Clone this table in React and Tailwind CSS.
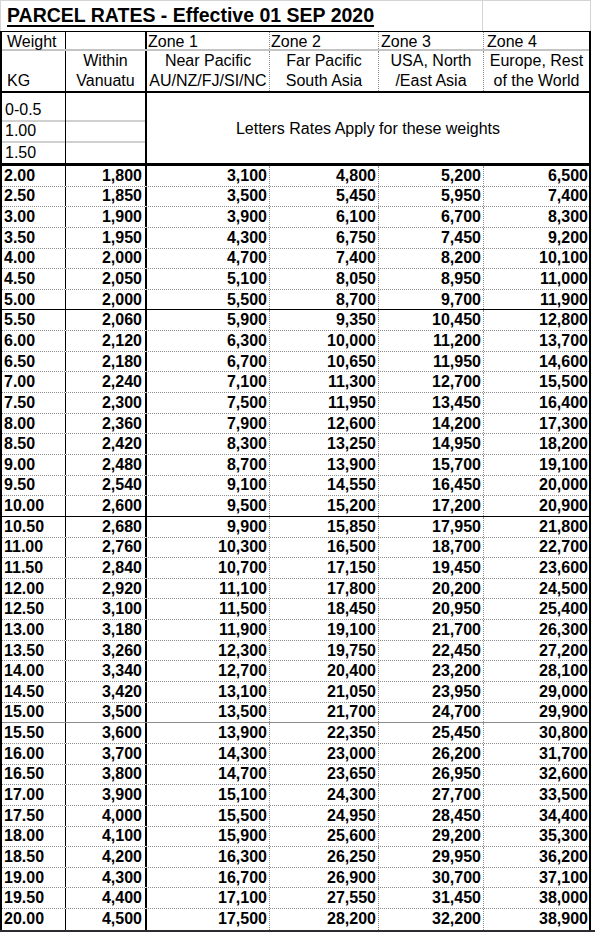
import React from "react";

const weights = Array.from({ length: 37 }, (_, i) => (2 + i * 0.5).toFixed(2));
const cols = [
  [1800,1850,1900,1950,2000,2050,2000,2060,2120,2180,2240,2300,2360,2420,2480,2540,2600,2680,2760,2840,2920,3100,3180,3260,3340,3420,3500,3600,3700,3800,3900,4000,4100,4200,4300,4400,4500],
  [3100,3500,3900,4300,4700,5100,5500,5900,6300,6700,7100,7500,7900,8300,8700,9100,9500,9900,10300,10700,11100,11500,11900,12300,12700,13100,13500,13900,14300,14700,15100,15500,15900,16300,16700,17100,17500],
  [4800,5450,6100,6750,7400,8050,8700,9350,10000,10650,11300,11950,12600,13250,13900,14550,15200,15850,16500,17150,17800,18450,19100,19750,20400,21050,21700,22350,23000,23650,24300,24950,25600,26250,26900,27550,28200],
  [5200,5950,6700,7450,8200,8950,9700,10450,11200,11950,12700,13450,14200,14950,15700,16450,17200,17950,18700,19450,20200,20950,21700,22450,23200,23950,24700,25450,26200,26950,27700,28450,29200,29950,30700,31450,32200],
  [6500,7400,8300,9200,10100,11000,11900,12800,13700,14600,15500,16400,17300,18200,19100,20000,20900,21800,22700,23600,24500,25400,26300,27200,28100,29000,29900,30800,31700,32600,33500,34400,35300,36200,37100,38000,38900],
];

const fmt = (n) => n.toLocaleString("en-US");

function rowBorder(i) {
  if (i === 6 || i === 16) return "border-b border-solid border-black";
  if (i === 26) return "border-b border-solid border-[#8c8c8c]";
  if (i === 36) return "";
  return "border-b border-dotted border-[#8c8c8c]";
}

export default function App() {
  return (
    <div
      className="w-[595px] h-[932px] bg-white text-black overflow-hidden flex flex-col"
      style={{ fontFamily: '"Liberation Sans", Arial, sans-serif' }}
    >
      {/* Title row */}
      <div className="h-[31px] w-[591px] flex border-t border-[#d4d4d4] border-l border-l-[#d4d4d4] shrink-0">
        <div className="w-[482px] h-full border-r border-[#d4d4d4] flex items-center pl-[6px]">
          <span className="text-[19.5px] font-bold underline decoration-2 underline-offset-[3px] leading-none">
            PARCEL RATES - Effective 01 SEP 2020
          </span>
        </div>
        <div className="w-[108px] h-full border-r border-[#d4d4d4]"></div>
      </div>

      {/* Table */}
      <div className="w-[591px] border-l-2 border-r-2 border-black shrink-0">
        {/* Header */}
        <div className="border-t border-black text-[16px] leading-[20px]">
          <div className="flex h-[19px] border-b-2 border-[#c4c4c4]">
            <div className="w-[64px] border-r border-black pl-[5px] leading-[19px]">Weight</div>
            <div className="w-[81px] border-r-2 border-black"></div>
            <div className="w-[123px] border-r border-dotted border-[#8c8c8c] pl-[1px] leading-[19px]">Zone 1</div>
            <div className="w-[109px] border-r border-dotted border-[#8c8c8c] pl-[1px] leading-[19px]">Zone 2</div>
            <div className="w-[105px] border-r border-dotted border-[#8c8c8c] pl-[2px] leading-[19px]">Zone 3</div>
            <div className="w-[105px] pl-[3px] leading-[19px]">Zone 4</div>
          </div>
          <div className="flex h-[42px] border-b-2 border-black">
            <div className="w-[64px] border-r border-black pl-[5px] flex flex-col justify-end">KG</div>
            <div className="w-[81px] border-r-2 border-black flex flex-col justify-end items-center">
              <span>Within</span>
              <span>Vanuatu</span>
            </div>
            <div className="w-[123px] border-r border-dotted border-[#8c8c8c] flex flex-col justify-end items-center">
              <span>Near Pacific</span>
              <span>AU/NZ/FJ/SI/NC</span>
            </div>
            <div className="w-[109px] border-r border-dotted border-[#8c8c8c] flex flex-col justify-end items-center">
              <span>Far Pacific</span>
              <span>South Asia</span>
            </div>
            <div className="w-[105px] border-r border-dotted border-[#8c8c8c] flex flex-col justify-end items-center">
              <span>USA, North</span>
              <span>/East Asia</span>
            </div>
            <div className="w-[105px] flex flex-col justify-end items-center">
              <span>Europe, Rest</span>
              <span>of the World</span>
            </div>
          </div>
        </div>

        {/* Letters section */}
        <div className="flex h-[73px] border-b-[3px] border-black text-[16px] leading-[20px]">
          <div className="w-[64px] border-r border-black flex flex-col">
            <div className="h-[29px] border-b-2 border-[#d0d0d0] pl-[3px] flex items-end">0-0.5</div>
            <div className="h-[21px] border-b-2 border-[#d0d0d0] pl-[3px] flex items-end">1.00</div>
            <div className="h-[20px] pl-[3px] flex items-end">1.50</div>
          </div>
          <div className="w-[81px] border-r-2 border-black flex flex-col">
            <div className="h-[29px] border-b-2 border-[#d0d0d0]"></div>
            <div className="h-[21px] border-b-2 border-[#d0d0d0]"></div>
            <div className="h-[20px]"></div>
          </div>
          <div className="flex-1 flex items-center justify-center pt-[1px]">
            Letters Rates Apply for these weights
          </div>
        </div>

        {/* Data rows */}
        <div className="text-[16px] font-bold leading-none">
          {weights.map((w, i) => (
            <div key={w} className={`flex h-[20.65px] ${rowBorder(i)}`}>
              <div className="w-[64px] border-r border-black pl-[2px] flex items-center">{w}</div>
              <div className="w-[81px] border-r-2 border-black pr-[3px] flex items-center justify-end">{fmt(cols[0][i])}</div>
              <div className="w-[123px] border-r border-dotted border-[#8c8c8c] pr-[2px] flex items-center justify-end">{fmt(cols[1][i])}</div>
              <div className="w-[109px] border-r border-dotted border-[#8c8c8c] pr-[2px] flex items-center justify-end">{fmt(cols[2][i])}</div>
              <div className="w-[105px] border-r border-dotted border-[#8c8c8c] pr-[2px] flex items-center justify-end">{fmt(cols[3][i])}</div>
              <div className="w-[105px] pr-[1px] flex items-center justify-end">{fmt(cols[4][i])}</div>
            </div>
          ))}
        </div>
      </div>
      <div className="flex-1 bg-[#2e2b33]"></div>
    </div>
  );
}
